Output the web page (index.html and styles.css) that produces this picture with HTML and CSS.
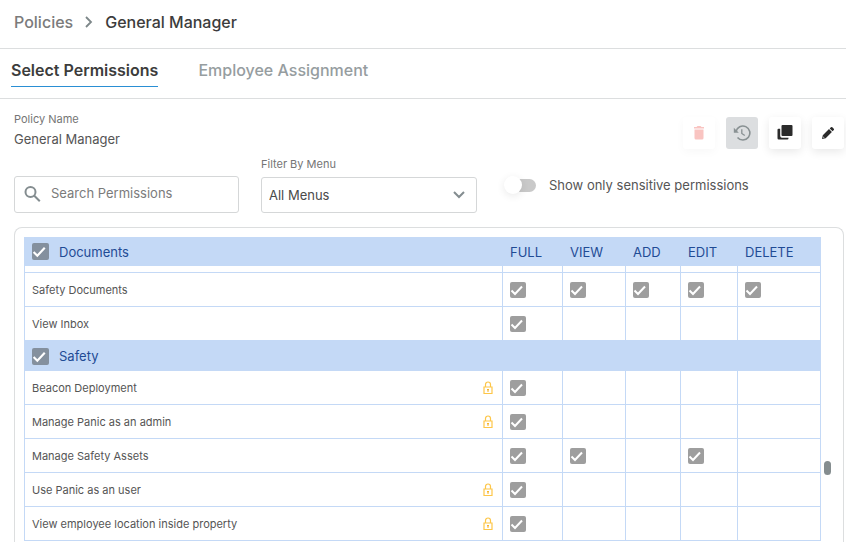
FILE: index.html
```
<!DOCTYPE html>
<html lang="en">
<head>
    <meta charset="UTF-8">
    <meta name="viewport" content="width=device-width, initial-scale=1.0">
    <title>General Manager - Policies</title>
    <link rel="stylesheet" href="styles.css">
</head>
<body>
    <nav class="breadcrumb">
        <a href="#policies">Policies</a>
        <svg width="8" height="12" viewBox="0 0 8 12" fill="none" stroke="#7d8789" stroke-width="1.800"><path d="M1 1l5 5-5 5"/></svg>
        <h1>General Manager</h1>
    </nav>

    <nav class="tabs">
        <a class="tab active" href="#permissions">Select Permissions</a>
        <a class="tab" href="#assignment">Employee Assignment</a>
    </nav>

    <main class="content">
        <div class="policy">
            <div>
                <div class="field-label">Policy Name</div>
                <div class="policy-name">General Manager</div>
            </div>
            <div class="actions">
                <button class="action faded" aria-label="Delete">
                    <svg width="12" height="14" viewBox="0 0 12 14" fill="#f9c4c1"><path d="M1 1h2.500l1-1h3l1 1H11v1.500H1zM1.500 3.500h9V12q0 1.500-1.500 1.500H3Q1.500 13.500 1.500 12z"/></svg>
                </button>
                <button class="action history" aria-label="History">
                    <svg width="18" height="16" viewBox="0 0 18 16" fill="none" stroke="#899193" stroke-width="1.600"><path d="M3 6.500A7 7 0 1 1 4.500 12.500"/><path d="M8.800 4.200v4.300l3 2" stroke-width="1.300"/><path d="M.8 2.800v5h5z" fill="#899193" stroke="none"/></svg>
                </button>
                <button class="action" aria-label="Copy">
                    <svg width="16" height="16" viewBox="0 0 16 16" fill="#2b2b2b"><rect x="4.500" y="0" width="11" height="11" rx="1"/><path d="M1.500 3.800h1.700v7.300q0 1.700 1.700 1.700h6.600v.5q0 1.200-1.200 1.200H1.700Q.5 14.500.5 13.300V4.800q0-1 1-1z"/></svg>
                </button>
                <button class="action" aria-label="Edit">
                    <svg width="14" height="14" viewBox="0 0 14 14" fill="#2b2b2b"><path d="M1 13l.8-3.700L8 3.100l2.900 2.900-6.200 6.200zM8.700 2.400l1.200-1.200q.7-.6 1.400 0l1.500 1.500q.6.700 0 1.400l-1.200 1.200z"/><path d="M2.200 11.800l.3-1.300 1 1z" fill="#fff"/></svg>
                </button>
            </div>
        </div>

        <div class="filters">
            <label class="search">
                <svg width="17" height="17" viewBox="0 0 17 17" fill="none" stroke="#848d90" stroke-width="2"><circle cx="6.500" cy="6" r="5"/><path d="M10.300 9.800l5.500 5.500"/></svg>
                <input type="text" placeholder="Search Permissions" aria-label="Search Permissions">
            </label>
            <div class="menu-filter">
                <label class="field-label" for="menu">Filter By Menu</label>
                <select id="menu">
                    <option>All Menus</option>
                </select>
            </div>
            <label class="toggle">
                <input type="checkbox">
                Show only sensitive permissions
            </label>
        </div>

        <section class="panel">
            <table class="permissions">
                <thead>
                    <tr>
                        <th class="name"><label class="group"><input type="checkbox" checked>Documents</label></th>
                        <th class="full">FULL</th>
                        <th class="view">VIEW</th>
                        <th class="add">ADD</th>
                        <th class="edit">EDIT</th>
                        <th class="delete">DELETE</th>
                    </tr>
                </thead>
                <tbody>
                    <tr class="sliver"><td></td><td></td><td></td><td></td><td></td><td></td></tr>
                    <tr>
                        <td>Safety Documents</td>
                        <td><input type="checkbox" aria-label="Safety Documents full" checked></td>
                        <td><input type="checkbox" aria-label="Safety Documents view" checked></td>
                        <td><input type="checkbox" aria-label="Safety Documents add" checked></td>
                        <td><input type="checkbox" aria-label="Safety Documents edit" checked></td>
                        <td><input type="checkbox" aria-label="Safety Documents delete" checked></td>
                    </tr>
                    <tr>
                        <td>View Inbox</td>
                        <td><input type="checkbox" aria-label="View Inbox full" checked></td>
                        <td></td><td></td><td></td><td></td>
                    </tr>
                    <tr class="group-row">
                        <th colspan="6"><label class="group"><input type="checkbox" checked>Safety</label></th>
                    </tr>
                    <tr>
                        <td><div class="sensitive">Beacon Deployment <svg class="lock" viewBox="0 0 10 14"><use href="#lock"/></svg></div></td>
                        <td><input type="checkbox" aria-label="Beacon Deployment full" checked></td>
                        <td></td><td></td><td></td><td></td>
                    </tr>
                    <tr>
                        <td><div class="sensitive">Manage Panic as an admin <svg class="lock" viewBox="0 0 10 14"><use href="#lock"/></svg></div></td>
                        <td><input type="checkbox" aria-label="Manage Panic as an admin full" checked></td>
                        <td></td><td></td><td></td><td></td>
                    </tr>
                    <tr>
                        <td>Manage Safety Assets</td>
                        <td><input type="checkbox" aria-label="Manage Safety Assets full" checked></td>
                        <td><input type="checkbox" aria-label="Manage Safety Assets view" checked></td>
                        <td></td>
                        <td><input type="checkbox" aria-label="Manage Safety Assets edit" checked></td>
                        <td></td>
                    </tr>
                    <tr>
                        <td><div class="sensitive">Use Panic as an user <svg class="lock" viewBox="0 0 10 14"><use href="#lock"/></svg></div></td>
                        <td><input type="checkbox" aria-label="Use Panic as an user full" checked></td>
                        <td></td><td></td><td></td><td></td>
                    </tr>
                    <tr>
                        <td><div class="sensitive">View employee location inside property <svg class="lock" viewBox="0 0 10 14"><use href="#lock"/></svg></div></td>
                        <td><input type="checkbox" aria-label="View employee location inside property full" checked></td>
                        <td></td><td></td><td></td><td></td>
                    </tr>
                </tbody>
            </table>
            <div class="scroll-thumb"></div>
        </section>
    </main>

    <svg width="0" height="0" class="sprites">
        <symbol id="lock" viewBox="0 0 10 14">
            <path d="M1 6h8v6.500H1zM2.500 6V3.500a2.500 2.500 0 0 1 5 0V6" fill="none" stroke="#fdc648" stroke-width="1.200"/>
            <path d="M4 8h2v1.300h-.5V11h-1V9.300H4z" fill="#f7b52c"/>
        </symbol>
    </svg>
</body>
</html>
```
FILE: styles.css
```
* {
    box-sizing: border-box;
}

body {
    font-family: Inter, "Liberation Sans", sans-serif;
    background: #fff;
    color: #555;
    margin: 0;
    height: 100vh;
    display: flex;
    flex-direction: column;
    overflow: hidden;
}

.breadcrumb {
    display: flex;
    align-items: center;
    gap: 12px;
    height: 49px;
    padding: 0 14px 4px;
    border-bottom: 1px solid #dcdedf;
    font-size: 16px;
    font-weight: 500;
}

.breadcrumb a {
    color: #7b7b7b;
    text-decoration: none;
}

.breadcrumb h1 {
    margin: 0;
    font-size: 16px;
    font-weight: 500;
    color: #3c3c3c;
}

.tabs {
    display: flex;
    align-items: flex-start;
    gap: 40px;
    height: 50px;
    padding: 11px 11px 0;
    border-bottom: 1px solid #dcdedf;
}

.tab {
    padding-bottom: 6px;
    border-bottom: 1px solid transparent;
    font-size: 16px;
    line-height: 20px;
    font-weight: 500;
    color: #969da0;
    text-decoration: none;
}

.tab.active {
    font-weight: 600;
    color: #3c3c3c;
    border-bottom-color: #2a8fd4;
}

.content {
    flex: 1;
    min-height: 0;
    display: flex;
    flex-direction: column;
    padding: 12px 2px 0 14px;
}

.policy {
    display: flex;
    justify-content: space-between;
}

.field-label {
    font-size: 11px;
    line-height: 16px;
    color: #757575;
}

.policy-name {
    margin-top: 3px;
    font-size: 13px;
    line-height: 18px;
}

.actions {
    display: flex;
    gap: 11px;
    padding-top: 6px;
}

.action {
    display: flex;
    align-items: center;
    justify-content: center;
    width: 32px;
    height: 32px;
    padding: 0;
    border: none;
    border-radius: 3px;
    background: #fff;
    box-shadow: 0 3px 10px rgba(0,0,0,0.09);
}

.action.faded {
    box-shadow: 0 3px 10px rgba(0,0,0,0.03);
}

.action.history {
    background: #dcdee0;
    box-shadow: none;
}

.filters {
    display: flex;
    align-items: flex-end;
    gap: 22px;
    margin: 7px 0 14px;
}

.search {
    display: flex;
    align-items: center;
    gap: 10px;
    width: 225px;
    height: 37px;
    padding: 0 9px;
    border: 1px solid #d5d7d8;
    border-radius: 3px;
}

.search input {
    flex: 1;
    min-width: 0;
    padding: 0 0 3px;
    border: none;
    outline: none;
    font: 13px Inter, "Liberation Sans", sans-serif;
}

.search input::placeholder {
    color: #7b7b7b;
}

.menu-filter {
    display: flex;
    flex-direction: column;
    gap: 5px;
    width: 216px;
}

.menu-filter select {
    height: 36px;
    padding: 0 7px;
    border: 1px solid #d5d7d8;
    border-radius: 3px;
    appearance: none;
    background: #fff url("data:image/svg+xml,%3Csvg xmlns='http://www.w3.org/2000/svg' width='12' height='8' fill='none' stroke='%23848d90' stroke-width='2'%3E%3Cpath d='M1 1l5 5 5-5'/%3E%3C/svg%3E") no-repeat right 11px center;
    font: 13px Inter, "Liberation Sans", sans-serif;
    color: #4a4a4a;
}

.toggle {
    display: flex;
    align-items: center;
    gap: 13px;
    padding: 0 0 19px 8px;
    font-size: 13px;
    line-height: 18px;
}

/* switch: grey track with a white knob at its left end */
.toggle input {
    position: relative;
    appearance: none;
    width: 29px;
    height: 13px;
    margin: 0;
    border-radius: 7px;
    background: #c9c9c9;
}

.toggle input::before {
    content: "";
    position: absolute;
    top: -3px;
    left: -3px;
    width: 18px;
    height: 18px;
    border-radius: 50%;
    background: #fff;
    box-shadow: 0 2px 8px rgba(0,0,0,0.09);
}

.panel {
    position: relative;
    flex: 1;
    min-height: 0;
    padding: 9px 22px 0 9px;
    border: 1px solid #dcdedf;
    border-bottom: none;
    border-radius: 8px 8px 0 0;
    overflow: hidden;
}

.scroll-thumb {
    position: absolute;
    top: 233px;
    right: 12px;
    width: 7px;
    height: 14px;
    border-radius: 4px;
    background: #858d8f;
}

.permissions {
    width: 100%;
    table-layout: fixed;
    border-collapse: separate;
    border-spacing: 0;
    border-left: 1px solid #c4d9f6;
}

.permissions th {
    height: 29px;
    padding: 0 7px;
    background: #c4d9f6;
    font-size: 13px;
    font-weight: 400;
    line-height: 16px;
    text-align: left;
    color: #1f4b95;
}

.permissions .group-row th {
    height: 30px;
}

.permissions td {
    height: 34px;
    padding: 0 7px;
    border-right: 1px solid #c4d9f6;
    border-bottom: 1px solid #c4d9f6;
    font-size: 11px;
    line-height: 16px;
}

.permissions .sliver td {
    height: 7px;
}

.full {
    width: 60px;
}

.view {
    width: 63px;
}

.add {
    width: 55px;
}

.edit {
    width: 57px;
}

.delete {
    width: 83px;
}

.permissions input {
    display: block;
    appearance: none;
    width: 16px;
    height: 16px;
    margin: 0;
    border-radius: 2px;
    background: #9e9e9e;
}

.permissions input:checked {
    background-image: url("data:image/svg+xml,%3Csvg xmlns='http://www.w3.org/2000/svg' viewBox='0 0 16 16' fill='none' stroke='white' stroke-width='2'%3E%3Cpath d='M1.500 8.500l3.500 3.500 7-7.500'/%3E%3C/svg%3E");
}

.group {
    display: flex;
    align-items: center;
    gap: 10px;
}

.permissions .group input {
    width: 17px;
    height: 17px;
    background-color: #84909e;
}

.sensitive {
    display: flex;
    align-items: center;
    justify-content: space-between;
}

.lock {
    width: 10px;
    height: 14px;
    margin-right: 2px;
}

.sprites {
    position: absolute;
}
```
